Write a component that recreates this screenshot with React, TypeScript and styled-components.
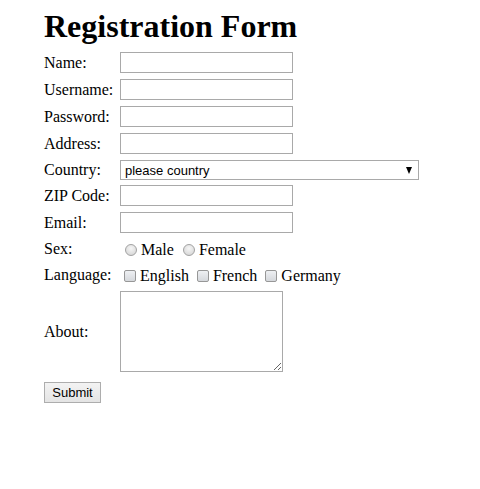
import React from "react";
import styled, { createGlobalStyle } from "styled-components";

const Global = createGlobalStyle`
  html, body { margin: 0; padding: 0; background: #fff; }
  body { font-family: "Liberation Serif", "Times New Roman", serif; color: #000; }
`;

const Page = styled.div`
  padding: 8px 0 0 44px;
`;

const Title = styled.h1`
  margin: 0;
  font-family: "Liberation Serif", "Times New Roman", serif;
  font-size: 32px;
  line-height: 37px;
  font-weight: bold;
`;

const Form = styled.form`
  display: flex;
  flex-direction: column;
  margin-top: 4px;
`;

const Row = styled.div<{ $h: number }>`
  display: grid;
  grid-template-columns: 76px auto;
  align-items: center;
  height: ${(p) => p.$h}px;
  font-size: 16px;
  line-height: 18px;
`;

const Label = styled.label`
  white-space: nowrap;
`;

const TextInput = styled.input`
  box-sizing: border-box;
  width: 173px;
  height: 21px;
  margin: 0;
  padding: 1px 3px;
  border: 1px solid #a9a9a9;
  background: #fff;
  font-family: "Liberation Sans", Arial, sans-serif;
  font-size: 13px;
  outline: none;
`;

const SelectWrap = styled.div`
  position: relative;
  width: 299px;
  height: 20px;
  margin-top: 1px;
`;

const Select = styled.select`
  appearance: none;
  -webkit-appearance: none;
  box-sizing: border-box;
  width: 299px;
  height: 20px;
  margin: 0;
  padding: 0 20px 0 4px;
  border: 1px solid #a9a9a9;
  border-radius: 0;
  background: #fff;
  color: #000;
  font-family: "Liberation Sans", Arial, sans-serif;
  font-size: 13px;
  outline: none;
`;

const Arrow = styled.span`
  position: absolute;
  right: 7px;
  top: 7px;
  width: 0;
  height: 0;
  border-left: 3.5px solid transparent;
  border-right: 3.5px solid transparent;
  border-top: 7px solid #000;
  pointer-events: none;
`;

const Options = styled.div`
  display: flex;
  align-items: center;
  white-space: nowrap;
  padding-top: 2px;
`;

const Radio = styled.input.attrs({ type: "radio" })`
  appearance: none;
  -webkit-appearance: none;
  box-sizing: border-box;
  width: 12px;
  height: 12px;
  margin: 0 4px 0 5px;
  border: 1px solid #a2a2a2;
  border-radius: 50%;
  background: radial-gradient(circle at 50% 35%, #f6f6f6 0%, #dcdcdc 70%, #cfcfcf 100%);
`;

const Check = styled.input.attrs({ type: "checkbox" })`
  appearance: none;
  -webkit-appearance: none;
  box-sizing: border-box;
  width: 12px;
  height: 12px;
  margin: 0 4px 0 4px;
  border: 1px solid #979797;
  border-radius: 2px;
  background: linear-gradient(180deg, #eef0f3 0%, #d5d8dc 100%);
`;

const OptionText = styled.span<{ $gap: number }>`
  margin-right: ${(p) => p.$gap}px;
`;

const TextArea = styled.textarea`
  box-sizing: border-box;
  width: 163px;
  height: 81px;
  margin: 0;
  border: 1px solid #a9a9a9;
  outline: none;
`;

const Submit = styled.button`
  box-sizing: border-box;
  width: 57px;
  height: 21px;
  margin-top: 7px;
  padding: 0;
  border: 1px solid #adadad;
  border-radius: 0;
  background: linear-gradient(180deg, #f3f3f3 0%, #e4e4e4 100%);
  font-family: "Liberation Sans", Arial, sans-serif;
  font-size: 13px;
  color: #000;
  align-self: flex-start;
`;

const fields: { label: string; type: string }[] = [
  { label: "Name:", type: "text" },
  { label: "Username:", type: "text" },
  { label: "Password:", type: "password" },
  { label: "Address:", type: "text" },
];

export default function App() {
  return (
    <>
      <Global />
      <Page>
        <Title>Registration Form</Title>
        <Form onSubmit={(e) => e.preventDefault()}>
          {fields.map((f) => (
            <Row $h={27} key={f.label}>
              <Label>{f.label}</Label>
              <TextInput type={f.type} />
            </Row>
          ))}
          <Row $h={25}>
            <Label>Country:</Label>
            <SelectWrap>
              <Select defaultValue="">
                <option value="">please country</option>
              </Select>
              <Arrow />
            </SelectWrap>
          </Row>
          <Row $h={27}>
            <Label>ZIP Code:</Label>
            <TextInput type="text" />
          </Row>
          <Row $h={27}>
            <Label>Email:</Label>
            <TextInput type="email" />
          </Row>
          <Row $h={26}>
            <Label>Sex:</Label>
            <Options>
              <Radio name="sex" />
              <OptionText $gap={4}>Male</OptionText>
              <Radio name="sex" />
              <OptionText $gap={0}>Female</OptionText>
            </Options>
          </Row>
          <Row $h={26}>
            <Label>Language:</Label>
            <Options>
              <Check />
              <OptionText $gap={4}>English</OptionText>
              <Check />
              <OptionText $gap={4}>French</OptionText>
              <Check />
              <OptionText $gap={0}>Germany</OptionText>
            </Options>
          </Row>
          <Row $h={87}>
            <Label>About:</Label>
            <TextArea />
          </Row>
          <Submit type="submit">Submit</Submit>
        </Form>
      </Page>
    </>
  );
}
